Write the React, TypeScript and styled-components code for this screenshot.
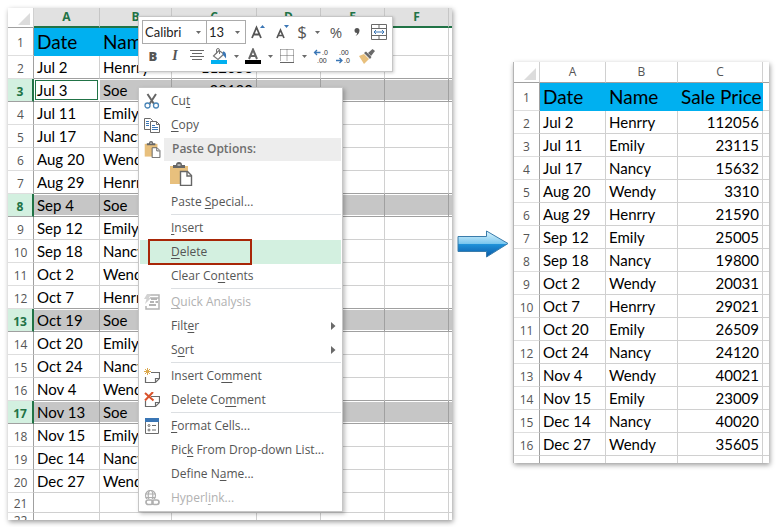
import React from "react";
import styled, { createGlobalStyle, css } from "styled-components";

const GlobalStyle = createGlobalStyle`
  *, *::before, *::after { box-sizing: border-box; }
  body { margin: 0; background: #fff; }
  button, select { font: inherit; color: inherit; margin: 0; }
`;

const UI_FONT = '"Open Sans", "Noto Sans", sans-serif';
const CELL_FONT = 'Lato, "Open Sans", sans-serif';
const GREEN = "#217346";
const GRID = "#d0d0d0";
const DARK = "#a0a0a0";

/* ---------- page ---------- */

const Page = styled.main`
  display: grid;
  grid-template-columns: minmax(0, 444fr) 61px minmax(0, 256fr);
  align-items: start;
  padding: 8px;
  overflow: hidden;
`;

const Before = styled.section`
  position: relative;
`;

const After = styled.section`
  margin-top: 54px;
`;

const ArrowSlot = styled.div`
  display: flex;
  justify-content: center;
  margin-top: 222px;
`;

/* ---------- sheet ---------- */

const SheetFrame = styled.div<{ $edge?: boolean }>`
  overflow: hidden;
  background: #fff;
  border-left: ${(p) => (p.$edge ? "1px solid #b4b4b4" : "0")};
  box-shadow: 1px 2px 5px rgba(0, 0, 0, 0.4);
`;

const Grid = styled.table`
  width: 100%;
  table-layout: fixed;
  border-collapse: separate;
  border-spacing: 0;
`;

const Col = styled.col<{ $w?: number }>`
  width: ${(p) => (p.$w ? `${p.$w}px` : "auto")};
`;

const headText = css`
  font: 400 12px/16px ${UI_FONT};
  color: #555;
`;

const Corner = styled.td<{ $h: number }>`
  height: ${(p) => p.$h}px;
  padding: 4px 3px 2px 0;
  text-align: right;
  vertical-align: bottom;
  line-height: 0;
  background: #fff;
  border-right: 1px solid ${GRID};
  border-bottom: 1px solid ${DARK};
`;

const ColHead = styled.th<{ $picked?: boolean }>`
  ${headText}
  padding: 0;
  overflow: hidden;
  border-right: 1px solid ${GRID};
  border-bottom: 1px solid ${DARK};
  ${(p) =>
    p.$picked &&
    css`
      font-weight: 700;
      color: ${GREEN};
      background: #e1e1e1;
      border-right-color: #c6c6c6;
      border-bottom: 2px solid ${GREEN};
    `}
  &:last-child { border-right: 0; }
`;

const RowHead = styled.th<{ $picked?: boolean }>`
  ${headText}
  padding: 3px 0 0;
  text-align: center;
  background: #fff;
  border-right: 1px solid ${DARK};
  border-bottom: 1px solid #dedede;
  ${(p) =>
    p.$picked &&
    css`
      font-weight: 700;
      color: ${GREEN};
      background: #d3f0e0;
      border-right: 2px solid ${GREEN};
      border-bottom-color: ${DARK};
    `}
`;

const TailHead = styled(RowHead)`
  padding: 0;
  border-bottom: 0;
`;

const Row = styled.tr<{ $h: number }>`
  height: ${(p) => p.$h}px;
`;

type CellLook = "plain" | "title" | "picked" | "active" | "tail";

const Cell = styled.td<{ $look: CellLook; $right?: boolean; $ruled?: boolean }>`
  padding: 0 3px;
  overflow: hidden;
  white-space: nowrap;
  font: 400 15px/20px ${CELL_FONT};
  color: #000;
  text-align: ${(p) => (p.$right ? "right" : "left")};
  border-right: 1px solid ${GRID};
  border-bottom: 1px solid ${(p) => (p.$ruled ? DARK : GRID)};
  ${(p) =>
    p.$look === "title" &&
    css`
      padding: 0 0 0 3px;
      font-size: 19px;
      line-height: 24px;
      text-align: left;
      background: #00b0f0;
      border-color: #00b0f0;
    `}
  ${(p) =>
    p.$look === "picked" &&
    css`
      background: #c6c6c6;
      border-color: ${DARK};
      box-shadow: inset 0 1px #fff, inset 0 -1px #fff;
    `}
  ${(p) =>
    p.$look === "active" &&
    css`
      border-right-color: #fff;
      border-bottom-color: ${DARK};
      box-shadow: inset 0 0 0 1px #fff, inset 0 0 0 2px ${GREEN};
    `}
  ${(p) =>
    p.$look === "tail" &&
    css`
      border-bottom: 0;
    `}
  &:last-child { border-right: 0; }
`;

const Clip = styled.div`
  height: 7px;
  overflow: hidden;
`;

/* ---------- mini toolbar ---------- */

const Toolbar = styled.div`
  position: absolute;
  left: 130px;
  top: 8px;
  padding: 3px 0 3px 3px;
  background: #fff;
  border: 1px solid #c6c6c6;
  box-shadow: 1px 1px 3px rgba(0, 0, 0, 0.2);
  font: 400 13px/16px ${UI_FONT};
  color: #555;
`;

const Tools = styled.div`
  display: flex;
  align-items: center;
  height: 24px;
`;

const Field = styled.label<{ $w: number }>`
  display: grid;
  width: ${(p) => p.$w}px;
  height: 24px;
  align-items: center;
  border: 1px solid #ababab;
  background: #fff;
  & + & { border-left: 0; }
  > * { grid-area: 1 / 1; }
  > svg { justify-self: end; margin-right: 5px; pointer-events: none; }
`;

const Picker = styled.select`
  appearance: none;
  width: 100%;
  height: 20px;
  padding: 0 2px;
  border: 0;
  background: transparent;
  font: 400 13px/18px ${CELL_FONT};
  color: #222;
`;

const Tool = styled.button<{ $w: number; $size?: number }>`
  display: flex;
  align-items: center;
  justify-content: center;
  width: ${(p) => p.$w}px;
  height: 24px;
  padding: 0;
  border: 0;
  background: transparent;
  font-size: ${(p) => p.$size ?? 13}px;
`;

const Bold = styled.b`
  font-weight: 800;
`;

const Italic = styled.i`
  font: italic 700 14px/16px "Liberation Serif", serif;
`;

/* ---------- context menu ---------- */

const Menu = styled.div`
  position: absolute;
  left: 130px;
  top: 79px;
  width: 205px;
  padding: 1px;
  background: #fff;
  border: 1px solid #c6c6c6;
  box-shadow: 2px 2px 4px rgba(0, 0, 0, 0.25);
  font: 400 12px/16px ${UI_FONT};
  color: #555;
`;

const Item = styled.button<{ $hot?: boolean }>`
  display: grid;
  grid-template-columns: 24px 1fr 16px;
  column-gap: 7px;
  align-items: center;
  width: 100%;
  height: 24px;
  padding: 0;
  border: 0;
  text-align: left;
  white-space: nowrap;
  background: ${(p) => (p.$hot ? "#d3f0e0" : "transparent")};
  &:disabled { color: #b1b1b1; }
  > svg { justify-self: center; }
  u { text-underline-offset: 2px; }
`;

const Group = styled.div`
  display: grid;
  grid-template-columns: 24px 1fr;
  align-items: center;
  height: 24px;
  > svg { justify-self: center; }
`;

const GroupTitle = styled.div`
  height: 23px;
  padding: 3px 8px;
  font-weight: 600;
  color: #6e6e6e;
  background: #ededed;
`;

const PasteChoice = styled.button`
  display: block;
  height: 29px;
  padding: 0 0 0 29px;
  border: 0;
  background: transparent;
`;

const Divider = styled.hr`
  height: 2px;
  margin: 0 0 0 31px;
  border: 0;
  border-top: 1px solid #dcdfe2;
`;

const Marker = styled.div`
  position: absolute;
  left: 9px;
  top: 151px;
  width: 104px;
  height: 26px;
  border: 2px solid #a82607;
  pointer-events: none;
`;

/* ---------- icons ---------- */

const Caret = () => (
  <svg width="5" height="3" viewBox="0 0 5 3"><path d="M0 0h5L2.5 3z" fill="#6a6a6a" /></svg>
);

const CornerMark = () => (
  <svg width="12" height="12" viewBox="0 0 12 12"><path d="M12 0v12H0z" fill="#dcdcdc" /></svg>
);

const SizeIcon = ({ up }: { up?: boolean }) => (
  <svg width="16" height="16" viewBox="0 0 16 16" fill="none">
    {up ? (
      <path d="M1 14L5.500 3.500 10 14M2.700 10.500h5.600" stroke="#555" strokeWidth="1.800" />
    ) : (
      <path d="M2 14L5.500 6 9 14M3.300 11.500h4.400" stroke="#555" strokeWidth="1.700" />
    )}
    <path d={up ? "M9 4h5L11.500 1z" : "M9 1h5L11.500 4z"} fill="#3a76b5" />
  </svg>
);

const MergeIcon = () => (
  <svg width="16" height="16" viewBox="0 0 16 16" fill="none" stroke="#6a6a6a">
    <path d="M.5.5h15v15H.5zM.5 4.500h15M.5 11.500h15M8 .5v4M8 11.500v4" />
    <path d="M3 8h10M5 6L3 8l2 2M11 6l2 2-2 2" stroke="#3a76b5" />
  </svg>
);

const LinesIcon = () => (
  <svg width="14" height="12" viewBox="0 0 14 12" stroke="#666">
    <path d="M0 .5h14M2 3.500h10M0 6.500h14M2 9.500h10" />
  </svg>
);

const BucketIcon = () => (
  <svg width="17" height="16" viewBox="0 0 17 16" fill="none">
    <path d="M8 2.500L2.500 8 7 11.500 13 6z" fill="#fff" stroke="#777" strokeWidth="1.200" />
    <path d="M5.500 6V2a1.500 1.500 0 013 0v4" stroke="#777" />
    <path d="M12 3.500c2.500 0 3.500 2 3 7-1-1-2-3-3.500-4z" fill="#3a76b5" />
    <path d="M0 12h16v4H0z" fill="#00b0f0" />
  </svg>
);

const FontColorIcon = () => (
  <svg width="16" height="16" viewBox="0 0 16 16">
    <path d="M4 11L8 1.500 12 11M5.500 8h5" fill="none" stroke="#666" strokeWidth="2" />
    <path d="M0 12h16v4H0z" fill="#000" />
  </svg>
);

const BorderIcon = () => (
  <svg width="14" height="14" viewBox="0 0 14 14" fill="none" stroke="#666">
    <path d="M.5.5h13v12M.5.5v12M7 .5v12M.5 6.500h13" strokeDasharray="1 1" />
    <path d="M0 13.500h14" />
  </svg>
);

const DecimalText = styled.text`
  font: 400 7px "Liberation Sans", sans-serif;
  fill: #333;
`;

const DecimalIcon = ({ more }: { more?: boolean }) => (
  <svg width="17" height="20" viewBox="0 0 17 20">
    <DecimalText x={more ? 9 : 4} y="9">{more ? ".0" : ".00"}</DecimalText>
    <DecimalText x={more ? 4 : 9} y="17">{more ? ".00" : ".0"}</DecimalText>
    <path
      d={more ? "M7.500 6.500h-6M4 4L1.500 6.500 4 9" : "M1 14.500h6M4.500 12L7 14.500 4.500 17"}
      fill="none"
      stroke="#3a76b5"
      strokeWidth="1.300"
    />
  </svg>
);

const BrushIcon = () => (
  <svg width="17" height="15" viewBox="0 0 17 15">
    <path d="M1 7l5-2 5 5-5 5z" fill="#e8c07d" />
    <path d="M6 4l2-1.500L13.500 8 12 10z" fill="#6a6a6a" />
    <path d="M10 4l4.500-4L17 2l-4 5z" fill="#6a6a6a" />
  </svg>
);

const CutIcon = () => (
  <svg width="16" height="16" viewBox="0 0 16 16" fill="none">
    <path d="M3.500 1l6.500 10M12 1L5.500 11" stroke="#666" strokeWidth="2" />
    <circle cx="3.500" cy="12.500" r="2.500" stroke="#4a86b8" strokeWidth="1.300" />
    <circle cx="12" cy="12.500" r="2.500" stroke="#4a86b8" strokeWidth="1.300" />
  </svg>
);

const CopyIcon = () => (
  <svg width="16" height="16" viewBox="0 0 16 16" fill="#fff" stroke="#6a6a6a">
    <path d="M.5 1.500h6l2 2v9h-8z" />
    <path d="M2 4.500h3M2 6.500h3M2 8.500h3" stroke="#3a76b5" />
    <path d="M6.500 4.500h6l3 3v8h-9zM12.500 4.500v3h3" />
    <path d="M8 8.500h3M8 10.500h6M8 12.500h6" stroke="#3a76b5" />
  </svg>
);

const PasteIcon = ({ size }: { size: number }) => (
  <svg width={size} height={size} viewBox="0 0 24 24">
    <path d="M1 4h18v18H1z" fill="#e8c07d" />
    <path d="M4 6V3h3a3 3 0 016 0h3v3z" fill="#666" />
    <path d="M8.500 3h3" stroke="#fff" />
    <path d="M11.500 9.500h7l4 4v10h-11z" fill="#fff" stroke="#666" strokeWidth="1.400" />
    <path d="M18 10v4h4" fill="none" stroke="#666" strokeWidth="1.400" />
  </svg>
);

const AnalysisIcon = () => (
  <svg width="16" height="16" viewBox="0 0 16 16">
    <path d="M4 1h11v14H2v-3M6 4h9" fill="none" stroke="#b4b4b4" strokeWidth="1.500" />
    <path d="M7 5h6M6 8h4M11.500 8H14M5 11h7" stroke="#b4b4b4" strokeWidth="2" />
    <path d="M3 0h4L5 4h2L1 10l1.500-5H0z" fill="#d2d2d2" />
  </svg>
);

const Note = () => (
  <path d="M7 4.500h8.500v6l-4 4h-10V9M15.500 10.500h-4v4" fill="none" stroke="#6a6a6a" strokeWidth="1.200" />
);

const AddNoteIcon = () => (
  <svg width="16" height="16" viewBox="0 0 16 16">
    <Note />
    <path d="M3.500 0v7M0 3.500h7M1 1l5 5M6 1L1 6" stroke="#dca94e" />
  </svg>
);

const DropNoteIcon = () => (
  <svg width="16" height="16" viewBox="0 0 16 16">
    <Note />
    <path d="M1 1l8.500 7.500M9 0L1 8.500" stroke="#d9532c" strokeWidth="2" />
  </svg>
);

const FormatIcon = () => (
  <svg width="14" height="16" viewBox="0 0 14 16" fill="none" stroke="#6a6a6a">
    <path d="M.5 3v12.500h13V3" />
    <path d="M0 2h14" stroke="#3a76b5" strokeWidth="4" />
    <circle cx="4" cy="7.500" r="1" /><circle cx="4" cy="12" r="1" />
    <path d="M7 7.500h4M7 12h4" />
  </svg>
);

const LinkIcon = () => (
  <svg width="16" height="16" viewBox="0 0 16 16" fill="none" stroke="#b0b0b0" strokeWidth="1.200">
    <circle cx="6.500" cy="5.500" r="5" />
    <ellipse cx="6.500" cy="5.500" rx="2.300" ry="5" />
    <path d="M1.500 4h10M1.500 7.500h10" />
    <path d="M1 9h15v7H1z" fill="#fff" stroke="none" />
    <rect x="2" y="10" width="7" height="4.500" rx="2.200" strokeWidth="1.700" />
    <rect x="8" y="10" width="7" height="4.500" rx="2.200" strokeWidth="1.700" />
  </svg>
);

const SubmenuIcon = () => (
  <svg width="5" height="8" viewBox="0 0 5 8"><path d="M0 0l4.500 4L0 8z" fill="#6a6a6a" /></svg>
);

const BlueArrow = () => (
  <svg width="52" height="28" viewBox="0 0 52 28">
    <defs>
      <linearGradient id="arrowFill" x1="0" y1="0" x2="0" y2="1">
        <stop offset="0" stopColor="#dff5fd" />
        <stop offset="0.480" stopColor="#7cc8ef" />
        <stop offset="0.520" stopColor="#1e90d8" />
        <stop offset="1" stopColor="#0a5aa8" />
      </linearGradient>
    </defs>
    <path
      d="M1 6.500H29.500V1L51 13.500 29.500 27v-5.500H1z"
      fill="url(#arrowFill)"
      stroke="#3a7cab"
      strokeLinejoin="round"
    />
  </svg>
);

/* ---------- data ---------- */

type Entry = { n: number; cells: string[]; h?: number };

const source: Entry[] = [
  { n: 2, cells: ["Jul 2", "Henrry", "112056"] },
  { n: 3, cells: ["Jul 3", "Soe", "28130"] },
  { n: 4, cells: ["Jul 11", "Emily"] },
  { n: 5, cells: ["Jul 17", "Nancy"] },
  { n: 6, cells: ["Aug 20", "Wendy"] },
  { n: 7, cells: ["Aug 29", "Henrry"] },
  { n: 8, cells: ["Sep 4", "Soe"] },
  { n: 9, cells: ["Sep 12", "Emily"] },
  { n: 10, cells: ["Sep 18", "Nancy"] },
  { n: 11, cells: ["Oct 2", "Wendy"] },
  { n: 12, cells: ["Oct 7", "Henrry"] },
  { n: 13, cells: ["Oct 19", "Soe"] },
  { n: 14, cells: ["Oct 20", "Emily"] },
  { n: 15, cells: ["Oct 24", "Nancy"] },
  { n: 16, cells: ["Nov 4", "Wendy"] },
  { n: 17, cells: ["Nov 13", "Soe"] },
  { n: 18, cells: ["Nov 15", "Emily"] },
  { n: 19, cells: ["Dec 14", "Nancy"] },
  { n: 20, cells: ["Dec 27", "Wendy"] },
  { n: 21, cells: [], h: 20 },
];

const result: Entry[] = [
  ["Jul 2", "Henrry", "112056"],
  ["Jul 11", "Emily", "23115"],
  ["Jul 17", "Nancy", "15632"],
  ["Aug 20", "Wendy", "3310"],
  ["Aug 29", "Henrry", "21590"],
  ["Sep 12", "Emily", "25005"],
  ["Sep 18", "Nancy", "19800"],
  ["Oct 2", "Wendy", "20031"],
  ["Oct 7", "Henrry", "29021"],
  ["Oct 20", "Emily", "26509"],
  ["Oct 24", "Nancy", "24120"],
  ["Nov 4", "Wendy", "40021"],
  ["Nov 15", "Emily", "23009"],
  ["Dec 14", "Nancy", "40020"],
  ["Dec 27", "Wendy", "35605"],
].map((cells, i) => ({ n: i + 2, cells }));

type SheetProps = {
  widths: number[];
  letters: string[];
  headHeight: number;
  titles: string[];
  rows: Entry[];
  picked?: number[];
  tail?: string;
  edge?: boolean;
};

function Sheet({ widths, letters, headHeight, titles, rows, picked = [], tail = "", edge }: SheetProps) {
  const any = picked.length > 0;
  const columns = [...letters, ""];
  return (
    <SheetFrame $edge={edge}>
      <Grid>
        <colgroup>
          {widths.map((w, i) => <Col key={i} $w={w} />)}
          <Col />
        </colgroup>
        <thead>
          <Row $h={headHeight}>
            <Corner $h={headHeight}><CornerMark /></Corner>
            {columns.map((l, i) => <ColHead key={i} $picked={any}>{l}</ColHead>)}
          </Row>
        </thead>
        <tbody>
          <Row $h={28}>
            <RowHead>1</RowHead>
            {columns.map((_, i) => (
              <Cell key={i} $look={titles[i] !== undefined ? "title" : "plain"}>{titles[i]}</Cell>
            ))}
          </Row>
          {rows.map((r) => {
            const on = picked.includes(r.n);
            return (
              <Row key={r.n} $h={r.h ?? 23}>
                <RowHead $picked={on}>{r.n}</RowHead>
                {columns.map((_, i) => (
                  <Cell
                    key={i}
                    $right={i === 2}
                    $ruled={picked.includes(r.n + 1)}
                    $look={!on ? "plain" : i === 0 && r.n === picked[0] ? "active" : "picked"}
                  >
                    {r.cells[i]}
                  </Cell>
                ))}
              </Row>
            );
          })}
          <Row $h={7}>
            <TailHead><Clip>{tail}</Clip></TailHead>
            {columns.map((_, i) => <Cell key={i} $look="tail"><Clip /></Cell>)}
          </Row>
        </tbody>
      </Grid>
    </SheetFrame>
  );
}

const MiniToolbar = () => (
  <Toolbar role="toolbar" aria-label="Formatting">
    <Tools>
      <Field $w={65}>
        <Picker aria-label="Font"><option>Calibri</option></Picker>
        <Caret />
      </Field>
      <Field $w={39}>
        <Picker aria-label="Font size"><option>13</option></Picker>
        <Caret />
      </Field>
      <Tool $w={26} aria-label="Increase font size"><SizeIcon up /></Tool>
      <Tool $w={22} aria-label="Decrease font size"><SizeIcon /></Tool>
      <Tool $w={16} $size={17}>$</Tool>
      <Tool $w={14} aria-label="Currency options"><Caret /></Tool>
      <Tool $w={24} $size={15}>%</Tool>
      <Tool $w={17} aria-label="Comma style">
        <svg width="6" height="8" viewBox="0 0 6 8"><path d="M3 0a2.500 2.500 0 012.500 2.500C5.500 5 4 7 1.500 8 3 6.500 3 5.500 3 5A2.500 2.500 0 013 0z" fill="#555" /></svg>
      </Tool>
      <Tool $w={27} aria-label="Merge and center"><MergeIcon /></Tool>
    </Tools>
    <Tools>
      <Tool $w={22}><Bold>B</Bold></Tool>
      <Tool $w={22}><Italic>I</Italic></Tool>
      <Tool $w={22} aria-label="Center"><LinesIcon /></Tool>
      <Tool $w={22} aria-label="Fill color"><BucketIcon /></Tool>
      <Tool $w={12} aria-label="Fill color options"><Caret /></Tool>
      <Tool $w={22} aria-label="Font color"><FontColorIcon /></Tool>
      <Tool $w={12} aria-label="Font color options"><Caret /></Tool>
      <Tool $w={22} aria-label="Borders"><BorderIcon /></Tool>
      <Tool $w={12} aria-label="Border options"><Caret /></Tool>
      <Tool $w={22} aria-label="Increase decimal"><DecimalIcon more /></Tool>
      <Tool $w={22} aria-label="Decrease decimal"><DecimalIcon /></Tool>
      <Tool $w={24} aria-label="Format painter"><BrushIcon /></Tool>
    </Tools>
  </Toolbar>
);

type EntryProps = {
  icon?: React.ReactNode;
  sub?: boolean;
  hot?: boolean;
  disabled?: boolean;
  children: React.ReactNode;
};

const MenuItem = ({ icon, sub, hot, disabled, children }: EntryProps) => (
  <Item role="menuitem" $hot={hot} disabled={disabled}>
    {icon ?? <span />}
    <span>{children}</span>
    {sub && <SubmenuIcon />}
  </Item>
);

const ContextMenu = () => (
  <Menu role="menu">
    <MenuItem icon={<CutIcon />}>Cu<u>t</u></MenuItem>
    <MenuItem icon={<CopyIcon />}><u>C</u>opy</MenuItem>
    <Group>
      <PasteIcon size={17} />
      <GroupTitle>Paste Options:</GroupTitle>
    </Group>
    <PasteChoice aria-label="Paste"><PasteIcon size={24} /></PasteChoice>
    <MenuItem>Paste <u>S</u>pecial...</MenuItem>
    <Divider />
    <MenuItem><u>I</u>nsert</MenuItem>
    <MenuItem hot><u>D</u>elete</MenuItem>
    <MenuItem>Clear Co<u>n</u>tents</MenuItem>
    <Divider />
    <MenuItem disabled icon={<AnalysisIcon />}><u>Q</u>uick Analysis</MenuItem>
    <MenuItem sub>Filt<u>e</u>r</MenuItem>
    <MenuItem sub>S<u>o</u>rt</MenuItem>
    <Divider />
    <MenuItem icon={<AddNoteIcon />}>Insert Co<u>m</u>ment</MenuItem>
    <MenuItem icon={<DropNoteIcon />}>Delete Co<u>m</u>ment</MenuItem>
    <Divider />
    <MenuItem icon={<FormatIcon />}><u>F</u>ormat Cells...</MenuItem>
    <MenuItem>Pic<u>k</u> From Drop-down List...</MenuItem>
    <MenuItem>Define N<u>a</u>me...</MenuItem>
    <MenuItem disabled icon={<LinkIcon />}>Hyperl<u>i</u>nk...</MenuItem>
    <Marker />
  </Menu>
);

export default function App() {
  return (
    <>
      <GlobalStyle />
      <Page>
        <Before>
          <Sheet
            widths={[26, 66, 72, 85, 64, 64, 64]}
            letters={["A", "B", "C", "D", "E", "F"]}
            headHeight={20}
            titles={["Date", "Name", ""]}
            rows={source}
            picked={[3, 8, 13, 17]}
            tail="22"
          />
          <MiniToolbar />
          <ContextMenu />
        </Before>
        <ArrowSlot><BlueArrow /></ArrowSlot>
        <After>
          <Sheet
            edge
            widths={[26, 66, 72, 85]}
            letters={["A", "B", "C"]}
            headHeight={21}
            titles={["Date", "Name", "Sale Price"]}
            rows={result}
          />
        </After>
      </Page>
    </>
  );
}
